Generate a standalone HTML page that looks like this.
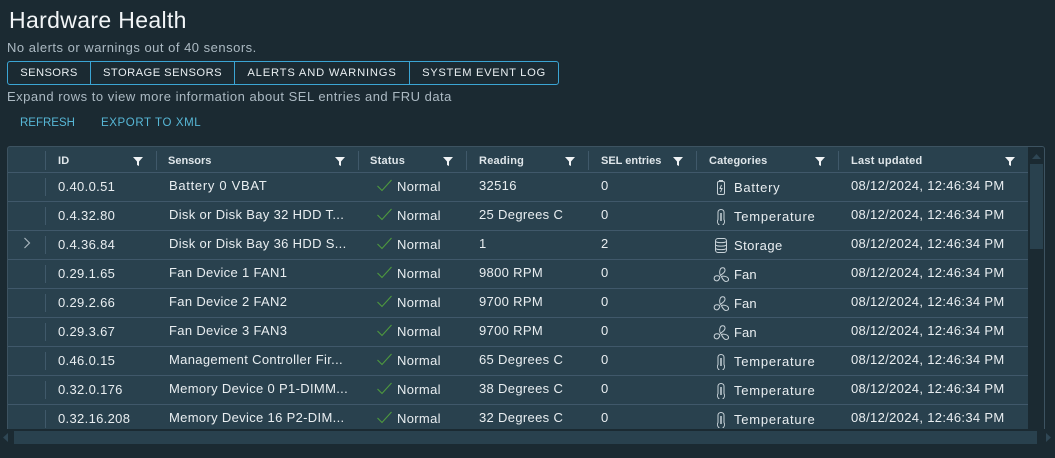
<!DOCTYPE html>
<html><head><meta charset="utf-8">
<style>
html,body{margin:0;padding:0;width:1055px;height:458px;overflow:hidden;background:#1b2a32;font-family:"Liberation Sans",sans-serif;color:#e9eef1}
div,span,svg{position:absolute;white-space:nowrap}
#h{left:9px;top:6px;font-size:23px;line-height:28px;color:#f2f5f7;letter-spacing:.35px}
.sub{left:7px;font-size:13px;line-height:16px;color:#acbac3;letter-spacing:.5px}
#tabs{left:7px;top:61px;width:550px;height:22px;border:1px solid #3ba5d4;border-radius:3px}
.tab{top:0;height:22px;line-height:23px;font-size:11.2px;color:#e9eef1;letter-spacing:.4px;text-align:center;border-right:1px solid #3ba5d4;box-sizing:content-box}
.act{top:115px;font-size:11.5px;line-height:16px;color:#57b7d6}
#t{left:7px;top:146px;width:1038px;height:283px;background:#29414e;border:1px solid #3d5361;border-bottom:0;border-right:1px solid #3d5361;border-radius:3px 3px 0 0;box-sizing:border-box;overflow:hidden}
.hd{top:7px;font-size:11px;line-height:14px;font-weight:bold;color:#dfe6ea;letter-spacing:.25px}
.vs{top:4px;width:1px;height:19px;background:#40596a}
.line{left:0;width:1020px;height:1px;background:#40586a}
.c{font-size:13px;line-height:16px;color:#e9eef1;letter-spacing:.33px}
.ic{width:16px;height:16px;fill:none;stroke:#c8d2d8;stroke-width:1}
.fl{width:10px;height:9px;fill:#f0f3f5}
#sb{left:1020px;top:0;width:18px;height:284px;background:#1b2a32}
#th{left:2px;top:17px;width:13px;height:85px;background:#29414e}
#hb{left:14px;top:431px;width:1023px;height:13px;background:#29414e}
</style></head><body>
<div id="h">Hardware Health</div>
<div class="sub" style="top:40px">No alerts or warnings out of 40 sensors.</div>
<div id="tabs">
<div class="tab" style="left:0;width:82px">SENSORS</div>
<div class="tab" style="left:83px;width:143px;letter-spacing:.45px">STORAGE SENSORS</div>
<div class="tab" style="left:227px;width:174px;letter-spacing:.82px">ALERTS AND WARNINGS</div>
<div class="tab" style="left:402px;width:148px;border:0;letter-spacing:.67px">SYSTEM EVENT LOG</div>
</div>
<div class="sub" style="top:89px">Expand rows to view more information about SEL entries and FRU data</div>
<div class="act" style="left:20px;letter-spacing:0">REFRESH</div>
<div class="act" style="left:101px;letter-spacing:.6px">EXPORT TO XML</div>
<div id="t">
<div class="hd" style="left:50px">ID</div><div class="hd" style="left:160px;letter-spacing:0">Sensors</div><div class="hd" style="left:362px">Status</div><div class="hd" style="left:471px">Reading</div><div class="hd" style="left:593px;letter-spacing:0">SEL entries</div><div class="hd" style="left:701px;letter-spacing:.15px">Categories</div><div class="hd" style="left:843px">Last updated</div>
<div class="vs" style="left:37px"></div><div class="vs" style="left:148px"></div><div class="vs" style="left:350px"></div><div class="vs" style="left:458px"></div><div class="vs" style="left:580px"></div><div class="vs" style="left:688px"></div><div class="vs" style="left:830px"></div>
<svg class="fl" style="left:125px;top:10px" viewBox="0 0 10 9"><path d="M0 0H10L6 4.5V9L4 8V4.5Z"/></svg>
<svg class="fl" style="left:327px;top:10px" viewBox="0 0 10 9"><path d="M0 0H10L6 4.5V9L4 8V4.5Z"/></svg>
<svg class="fl" style="left:435px;top:10px" viewBox="0 0 10 9"><path d="M0 0H10L6 4.5V9L4 8V4.5Z"/></svg>
<svg class="fl" style="left:557px;top:10px" viewBox="0 0 10 9"><path d="M0 0H10L6 4.5V9L4 8V4.5Z"/></svg>
<svg class="fl" style="left:665px;top:10px" viewBox="0 0 10 9"><path d="M0 0H10L6 4.5V9L4 8V4.5Z"/></svg>
<svg class="fl" style="left:807px;top:10px" viewBox="0 0 10 9"><path d="M0 0H10L6 4.5V9L4 8V4.5Z"/></svg>
<svg class="fl" style="left:997px;top:10px" viewBox="0 0 10 9"><path d="M0 0H10L6 4.5V9L4 8V4.5Z"/></svg>
<div class="line" style="top:25px"></div><div class="line" style="top:54px"></div><div class="line" style="top:83px"></div><div class="line" style="top:112px"></div><div class="line" style="top:141px"></div><div class="line" style="top:170px"></div><div class="line" style="top:199px"></div><div class="line" style="top:228px"></div><div class="line" style="top:257px"></div>

<div style="left:0;top:27px;width:1020px;height:29px"><div class="vs" style="left:37px;top:4px;height:18px"></div><div class="c" style="left:50px;top:5px">0.40.0.51</div><div class="c" style="left:161px;top:4px;letter-spacing:.7px">Battery 0 VBAT</div><svg style="left:369px;top:5px" width="15" height="13" fill="none" stroke="#4e9a3e" stroke-width="1.1" viewBox="0 0 15 13"><path d="M0.5 7L5 11.5L14.5 1"/></svg><div class="c" style="left:389px;top:5px">Normal</div><div class="c" style="left:471px;top:4px">32516</div><div class="c" style="left:593px;top:4px">0</div><svg class="ic" style="left:705px;top:6px" viewBox="0 0 16 16"><rect x="4.500" y="1.500" width="7" height="13" rx="1.500"/><path d="M6.500 1.500V0.500H9.500V1.500M8.500 5L7 8.500H9L7.500 12"/></svg><div class="c" style="left:726px;top:6px;letter-spacing:.75px">Battery</div><div class="c" style="left:843px;top:4px">08/12/2024, 12:46:34 PM</div></div>

<div style="left:0;top:56px;width:1020px;height:29px"><div class="vs" style="left:37px;top:4px;height:18px"></div><div class="c" style="left:50px;top:5px">0.4.32.80</div><div class="c" style="left:161px;top:4px">Disk or Disk Bay 32 HDD T...</div><svg style="left:369px;top:5px" width="15" height="13" fill="none" stroke="#4e9a3e" stroke-width="1.1" viewBox="0 0 15 13"><path d="M0.5 7L5 11.5L14.5 1"/></svg><div class="c" style="left:389px;top:5px">Normal</div><div class="c" style="left:471px;top:4px">25 Degrees C</div><div class="c" style="left:593px;top:4px">0</div><svg class="ic" style="left:705px;top:6px" viewBox="0 0 16 16"><path d="M5 3a3 2.500 0 0 1 6 0v7.500a3.500 4 0 1 1-6 0Z"/><path d="M8 4V12" stroke-width="1.500"/></svg><div class="c" style="left:726px;top:6px;letter-spacing:.78px">Temperature</div><div class="c" style="left:843px;top:4px">08/12/2024, 12:46:34 PM</div></div>

<div style="left:0;top:85px;width:1020px;height:29px"><svg style="left:15px;top:5px" width="8" height="12" fill="none" stroke="#a9b6be" stroke-width="1.2" viewBox="0 0 8 12"><path d="M1.5 1L6.5 6L1.5 11"/></svg><div class="vs" style="left:37px;top:4px;height:18px"></div><div class="c" style="left:50px;top:5px">0.4.36.84</div><div class="c" style="left:161px;top:4px">Disk or Disk Bay 36 HDD S...</div><svg style="left:369px;top:5px" width="15" height="13" fill="none" stroke="#4e9a3e" stroke-width="1.1" viewBox="0 0 15 13"><path d="M0.5 7L5 11.5L14.5 1"/></svg><div class="c" style="left:389px;top:5px">Normal</div><div class="c" style="left:471px;top:4px">1</div><div class="c" style="left:593px;top:4px">2</div><svg class="ic" style="left:705px;top:5px" viewBox="0 0 16 16"><rect x="2.500" y="1.500" width="11" height="14" rx="2.500"/><path d="M2.500 4.500C4 6 12 6 13.500 4.500M2.500 8C4 9.500 12 9.500 13.500 8M2.500 11.500C4 13 12 13 13.500 11.500"/></svg><div class="c" style="left:726px;top:6px;letter-spacing:.45px">Storage</div><div class="c" style="left:843px;top:4px">08/12/2024, 12:46:34 PM</div></div>

<div style="left:0;top:114px;width:1020px;height:29px"><div class="vs" style="left:37px;top:4px;height:18px"></div><div class="c" style="left:50px;top:5px">0.29.1.65</div><div class="c" style="left:161px;top:4px">Fan Device 1 FAN1</div><svg style="left:369px;top:5px" width="15" height="13" fill="none" stroke="#4e9a3e" stroke-width="1.1" viewBox="0 0 15 13"><path d="M0.5 7L5 11.5L14.5 1"/></svg><div class="c" style="left:389px;top:5px">Normal</div><div class="c" style="left:471px;top:4px">9800 RPM</div><div class="c" style="left:593px;top:4px">0</div><svg class="ic" style="left:705px;top:6px" viewBox="0 0 16 16"><path d="M7.500 8.500C6 6 6.500 1 9.500 .8C12.500 .6 12.500 4 11 5.500C10 6.500 8.500 7.500 7.500 8.500ZM8.500 9.500C10 8.500 15 9.500 15.500 12C15.800 14.500 12.500 15.200 11 13.500C9.800 12.300 8.800 11 8.500 9.500ZM6.800 9.800C5 8 1.500 8.500 1.200 11C.9 13.500 3.500 14.500 5.200 13.300C6.200 12.500 6.800 11.200 6.800 9.800Z"/></svg><div class="c" style="left:726px;top:6px;letter-spacing:.1px">Fan</div><div class="c" style="left:843px;top:4px">08/12/2024, 12:46:34 PM</div></div>

<div style="left:0;top:143px;width:1020px;height:29px"><div class="vs" style="left:37px;top:4px;height:18px"></div><div class="c" style="left:50px;top:5px">0.29.2.66</div><div class="c" style="left:161px;top:4px">Fan Device 2 FAN2</div><svg style="left:369px;top:5px" width="15" height="13" fill="none" stroke="#4e9a3e" stroke-width="1.1" viewBox="0 0 15 13"><path d="M0.5 7L5 11.5L14.5 1"/></svg><div class="c" style="left:389px;top:5px">Normal</div><div class="c" style="left:471px;top:4px">9700 RPM</div><div class="c" style="left:593px;top:4px">0</div><svg class="ic" style="left:705px;top:6px" viewBox="0 0 16 16"><path d="M7.500 8.500C6 6 6.500 1 9.500 .8C12.500 .6 12.500 4 11 5.500C10 6.500 8.500 7.500 7.500 8.500ZM8.500 9.500C10 8.500 15 9.500 15.500 12C15.800 14.500 12.500 15.200 11 13.500C9.800 12.300 8.800 11 8.500 9.500ZM6.800 9.800C5 8 1.500 8.500 1.200 11C.9 13.500 3.500 14.500 5.200 13.300C6.200 12.500 6.800 11.200 6.800 9.800Z"/></svg><div class="c" style="left:726px;top:6px;letter-spacing:.1px">Fan</div><div class="c" style="left:843px;top:4px">08/12/2024, 12:46:34 PM</div></div>

<div style="left:0;top:172px;width:1020px;height:29px"><div class="vs" style="left:37px;top:4px;height:18px"></div><div class="c" style="left:50px;top:5px">0.29.3.67</div><div class="c" style="left:161px;top:4px">Fan Device 3 FAN3</div><svg style="left:369px;top:5px" width="15" height="13" fill="none" stroke="#4e9a3e" stroke-width="1.1" viewBox="0 0 15 13"><path d="M0.5 7L5 11.5L14.5 1"/></svg><div class="c" style="left:389px;top:5px">Normal</div><div class="c" style="left:471px;top:4px">9700 RPM</div><div class="c" style="left:593px;top:4px">0</div><svg class="ic" style="left:705px;top:6px" viewBox="0 0 16 16"><path d="M7.500 8.500C6 6 6.500 1 9.500 .8C12.500 .6 12.500 4 11 5.500C10 6.500 8.500 7.500 7.500 8.500ZM8.500 9.500C10 8.500 15 9.500 15.500 12C15.800 14.500 12.500 15.200 11 13.500C9.800 12.300 8.800 11 8.500 9.500ZM6.800 9.800C5 8 1.500 8.500 1.200 11C.9 13.500 3.500 14.500 5.200 13.300C6.200 12.500 6.800 11.200 6.800 9.800Z"/></svg><div class="c" style="left:726px;top:6px;letter-spacing:.1px">Fan</div><div class="c" style="left:843px;top:4px">08/12/2024, 12:46:34 PM</div></div>

<div style="left:0;top:201px;width:1020px;height:29px"><div class="vs" style="left:37px;top:4px;height:18px"></div><div class="c" style="left:50px;top:5px">0.46.0.15</div><div class="c" style="left:161px;top:4px">Management Controller Fir...</div><svg style="left:369px;top:5px" width="15" height="13" fill="none" stroke="#4e9a3e" stroke-width="1.1" viewBox="0 0 15 13"><path d="M0.5 7L5 11.5L14.5 1"/></svg><div class="c" style="left:389px;top:5px">Normal</div><div class="c" style="left:471px;top:4px">65 Degrees C</div><div class="c" style="left:593px;top:4px">0</div><svg class="ic" style="left:705px;top:6px" viewBox="0 0 16 16"><path d="M5 3a3 2.500 0 0 1 6 0v7.500a3.500 4 0 1 1-6 0Z"/><path d="M8 4V12" stroke-width="1.500"/></svg><div class="c" style="left:726px;top:6px;letter-spacing:.78px">Temperature</div><div class="c" style="left:843px;top:4px">08/12/2024, 12:46:34 PM</div></div>

<div style="left:0;top:230px;width:1020px;height:29px"><div class="vs" style="left:37px;top:4px;height:18px"></div><div class="c" style="left:50px;top:5px">0.32.0.176</div><div class="c" style="left:161px;top:4px">Memory Device 0 P1-DIMM...</div><svg style="left:369px;top:5px" width="15" height="13" fill="none" stroke="#4e9a3e" stroke-width="1.1" viewBox="0 0 15 13"><path d="M0.5 7L5 11.5L14.5 1"/></svg><div class="c" style="left:389px;top:5px">Normal</div><div class="c" style="left:471px;top:4px">38 Degrees C</div><div class="c" style="left:593px;top:4px">0</div><svg class="ic" style="left:705px;top:6px" viewBox="0 0 16 16"><path d="M5 3a3 2.500 0 0 1 6 0v7.500a3.500 4 0 1 1-6 0Z"/><path d="M8 4V12" stroke-width="1.500"/></svg><div class="c" style="left:726px;top:6px;letter-spacing:.78px">Temperature</div><div class="c" style="left:843px;top:4px">08/12/2024, 12:46:34 PM</div></div>

<div style="left:0;top:259px;width:1020px;height:29px"><div class="vs" style="left:37px;top:4px;height:18px"></div><div class="c" style="left:50px;top:5px">0.32.16.208</div><div class="c" style="left:161px;top:4px">Memory Device 16 P2-DIM...</div><svg style="left:369px;top:5px" width="15" height="13" fill="none" stroke="#4e9a3e" stroke-width="1.1" viewBox="0 0 15 13"><path d="M0.5 7L5 11.5L14.5 1"/></svg><div class="c" style="left:389px;top:5px">Normal</div><div class="c" style="left:471px;top:4px">32 Degrees C</div><div class="c" style="left:593px;top:4px">0</div><svg class="ic" style="left:705px;top:6px" viewBox="0 0 16 16"><path d="M5 3a3 2.500 0 0 1 6 0v7.500a3.500 4 0 1 1-6 0Z"/><path d="M8 4V12" stroke-width="1.500"/></svg><div class="c" style="left:726px;top:6px;letter-spacing:.78px">Temperature</div><div class="c" style="left:843px;top:4px">08/12/2024, 12:46:34 PM</div></div>

<div id="sb"><div id="th"></div><svg style="left:4px;top:7px" width="9" height="5" viewBox="0 0 9 5"><path d="M0 5L4.500 0L9 5Z" fill="#2f4755"/></svg></div>
</div>
<div id="hb"></div>
<svg style="left:2px;top:433px" width="6" height="9" viewBox="0 0 6 9"><path d="M6 0L1 4.500L6 9Z" fill="#2f4755"/></svg>
<svg style="left:1046px;top:433px" width="6" height="9" viewBox="0 0 6 9"><path d="M0 0L5 4.500L0 9Z" fill="#2f4755"/></svg>
</body></html>
